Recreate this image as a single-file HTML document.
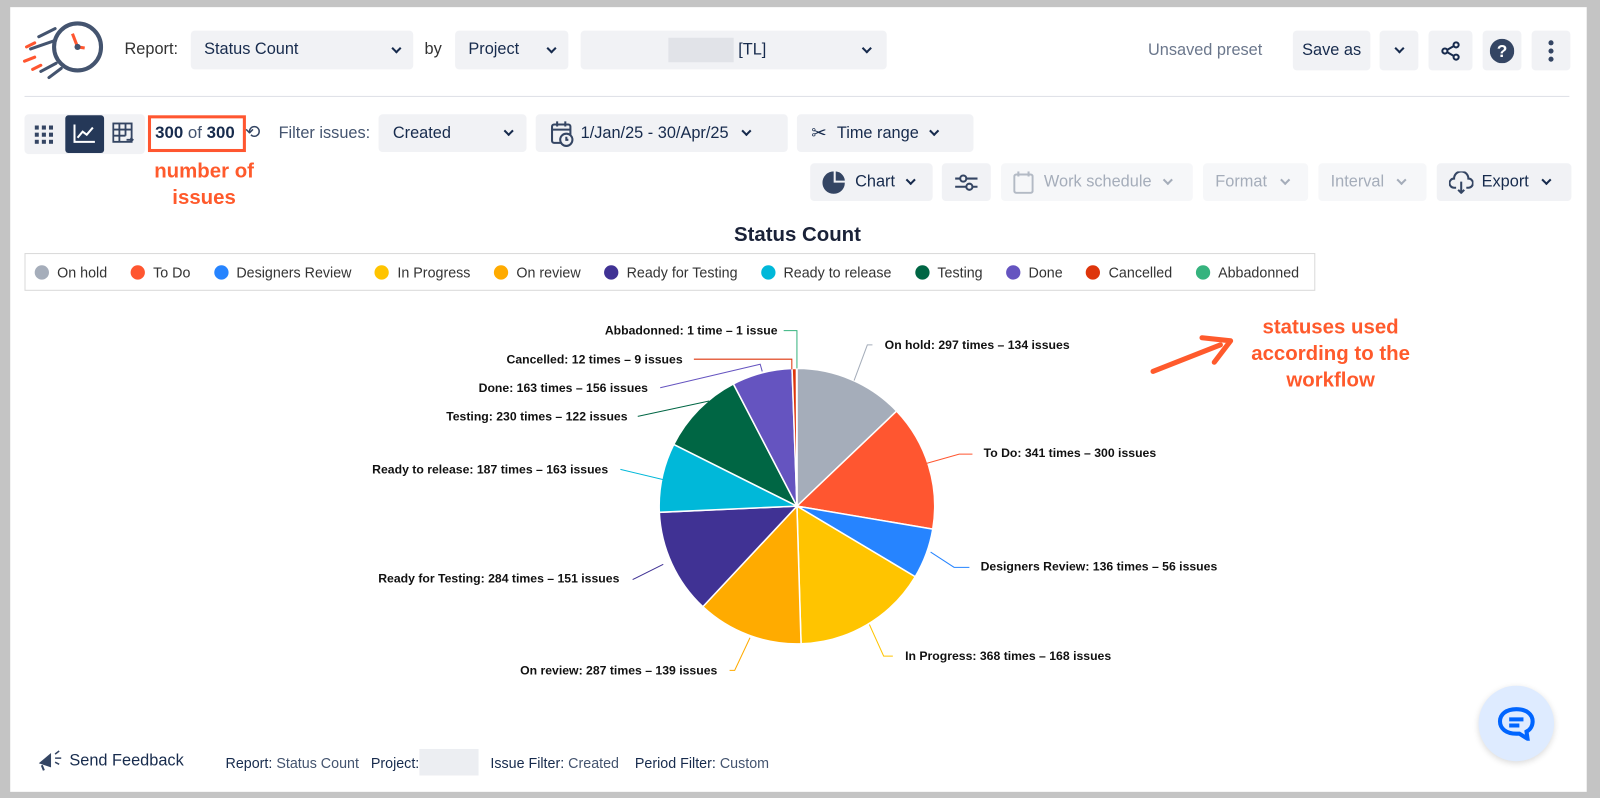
<!DOCTYPE html>
<html><head><meta charset="utf-8"><style>
*{box-sizing:border-box;margin:0;padding:0}
body{width:1600px;height:798px;background:#c4c4c4;font-family:"Liberation Sans",sans-serif;color:#172b4d;position:relative;overflow:hidden}
#s{position:absolute;left:0;top:0;width:1568px;height:782px;transform:scale(1.0204);transform-origin:0 0}
#w{position:absolute;left:10px;top:7px;width:1545px;height:769px;background:#fff}
.a{position:absolute}
.btn{position:absolute;background:#f1f2f5;border-radius:4px;font-size:16px;display:flex;align-items:center;color:#172b4d;white-space:nowrap}
.dis{color:#a5adba;background:#f6f7f9}
.chev{display:inline-block;width:7px;height:7px;border-right:2px solid currentColor;border-bottom:2px solid currentColor;transform:rotate(45deg);margin-top:-4px}
.lg{display:flex;align-items:center;font-size:14px;color:#333;margin-right:23px;white-space:nowrap}
.lg i{width:14px;height:14px;border-radius:50%;display:inline-block;margin-right:8px}
.lbl{font-size:12px;font-weight:bold;fill:#111}
.red{color:#ff5a2c;font-weight:bold;font-size:20px;text-align:center;line-height:26px}
</style></head><body>
<div id="s">
<div id="w"></div>
<svg class="a" style="left:22px;top:18px" width="80" height="62" viewBox="0 0 80 62">
<circle cx="54" cy="28" r="23" fill="none" stroke="#44546f" stroke-width="4"/>
<path d="M54 28 L49 15" stroke="#ff5630" stroke-width="3"/><path d="M54 28 L61 29" stroke="#ff5630" stroke-width="3"/>
<circle cx="54" cy="28" r="3" fill="#44546f"/>
<path d="M32 10 L16 18 M31 22 L8 30 M33 44 L18 52 M38 49 L26 58" stroke="#44546f" stroke-width="3" stroke-linecap="round"/>
<path d="M12 24 L4 28 M12 38 L2 42 M18 46 L10 50" stroke="#ff5630" stroke-width="3" stroke-linecap="round"/>
</svg>
<div class="a" style="left:122px;top:40px;font-size:16px;color:#333">Report:</div>
<div class="btn" style="left:187px;top:30px;width:218px;height:38px;padding:0 13px;justify-content:space-between">Status Count<span class="chev"></span></div>
<div class="a" style="left:416px;top:40px;font-size:16px;color:#333">by</div>
<div class="btn" style="left:446px;top:30px;width:111px;height:38px;padding:0 13px;justify-content:space-between">Project<span class="chev"></span></div>
<div class="btn" style="left:569px;top:30px;width:300px;height:38px;padding:0 16px 0 86px;justify-content:space-between"><span><span style="display:inline-block;width:64px;height:24px;background:#e1e3e8;vertical-align:middle"></span> [TL]</span><span class="chev"></span></div>
<div class="a" style="left:1125px;top:41px;font-size:16px;color:#6b778c">Unsaved preset</div>
<div class="btn" style="left:1267px;top:30px;width:76px;height:39px;justify-content:center">Save as</div>
<div class="btn" style="left:1352px;top:30px;width:38px;height:39px;justify-content:center"><span class="chev"></span></div>
<div class="btn" style="left:1400px;top:30px;width:43px;height:39px;justify-content:center"><svg width="20" height="20" viewBox="0 0 20 20" fill="none" stroke="#172b4d" stroke-width="2"><circle cx="15" cy="4" r="2.5"/><circle cx="4" cy="10" r="2.5"/><circle cx="15" cy="16" r="2.5"/><path d="M6 9 L13 5 M6 11 L13 15"/></svg></div>
<div class="btn" style="left:1453px;top:30px;width:38px;height:39px;justify-content:center"><svg width="24" height="24"><circle cx="12" cy="12" r="12" fill="#344563"/><text x="12" y="18" text-anchor="middle" font-size="17" font-weight="bold" fill="#fff" font-family="Liberation Sans">?</text></svg></div>
<div class="btn" style="left:1501px;top:30px;width:38px;height:39px;justify-content:center"><svg width="6" height="22"><circle cx="3" cy="3" r="2.5" fill="#344563"/><circle cx="3" cy="11" r="2.5" fill="#344563"/><circle cx="3" cy="19" r="2.5" fill="#344563"/></svg></div>
<div class="a" style="left:24px;top:94px;width:1514px;height:1px;background:#dfe1e6"></div>
<div class="btn" style="left:24px;top:112px;width:118px;height:39px"></div>
<svg class="a" style="left:34px;top:123px" width="18" height="18"><g fill="#344563"><rect x="0" y="0" width="4" height="4"/><rect x="7" y="0" width="4" height="4"/><rect x="14" y="0" width="4" height="4"/><rect x="0" y="7" width="4" height="4"/><rect x="7" y="7" width="4" height="4"/><rect x="14" y="7" width="4" height="4"/><rect x="0" y="14" width="4" height="4"/><rect x="7" y="14" width="4" height="4"/><rect x="14" y="14" width="4" height="4"/></g></svg>
<div class="a" style="left:64px;top:113px;width:38px;height:37px;background:#253858;border-radius:3px"></div>
<svg class="a" style="left:72px;top:121px" width="22" height="20" fill="none" stroke="#fff" stroke-width="2"><path d="M1 1 V18 H21"/><path d="M4 14 L9 8 L13 11 L19 4"/></svg>
<svg class="a" style="left:110px;top:120px" width="22" height="22" fill="none" stroke="#344563" stroke-width="1.8"><rect x="1" y="1" width="18" height="18"/><path d="M1 7 H19 M7 1 V19 M13 1 V13 M1 13 H13"/><path d="M14 17 H20 M18 15 L20 17 L18 19" /></svg>
<div class="a" style="left:145px;top:113px;width:96px;height:36px;border:3px solid #ff5630"></div>
<div class="a" style="left:152px;top:121px;font-size:16.5px"><b>300</b> <span style="color:#44546f">of</span> <b>300</b></div>
<div class="a" style="left:240px;top:119px;font-size:18px;color:#344563">⟲</div>
<div class="red a" style="left:138px;top:155px;width:124px">number of<br>issues</div>
<div class="a" style="left:273px;top:122px;font-size:16px;color:#44546f">Filter issues:</div>
<div class="btn" style="left:371px;top:112px;width:145px;height:37px;padding:0 14px;justify-content:space-between">Created<span class="chev"></span></div>
<div class="btn" style="left:525px;top:112px;width:247px;height:37px;padding:0 14px"><svg width="24" height="26" fill="none" stroke="#344563" stroke-width="2"><rect x="2" y="4" width="18" height="18" rx="2"/><path d="M2 9 H20 M7 1 V6 M15 1 V6"/><circle cx="16" cy="19" r="6" fill="#f1f2f5"/><path d="M16 16 V19 H18"/></svg><span style="margin:0 0 0 6px">1/Jan/25 - 30/Apr/25</span><span class="chev" style="margin-left:14px"></span></div>
<div class="btn" style="left:781px;top:112px;width:173px;height:37px;padding:0 14px"><span style="font-size:18px">✂</span><span style="margin:0 12px 0 10px">Time range</span><span class="chev"></span></div>
<div class="btn" style="left:794px;top:160px;width:120px;height:37px;padding:0 12px"><svg width="22" height="22"><path d="M11 11 V0 A11 11 0 1 0 22 11 Z" fill="#344563"/><path d="M13 0 A10 10 0 0 1 22 9 H13Z" fill="#344563"/></svg><span style="margin:0 12px 0 10px">Chart</span><span class="chev"></span></div>
<div class="btn" style="left:923px;top:160px;width:48px;height:37px;justify-content:center"><svg width="22" height="18" fill="none" stroke="#344563" stroke-width="2"><path d="M0 5 H22 M0 13 H22"/><circle cx="8" cy="5" r="3" fill="#f1f2f5"/><circle cx="14" cy="13" r="3" fill="#f1f2f5"/></svg></div>
<div class="btn dis" style="left:981px;top:160px;width:188px;height:37px;padding:0 12px"><svg width="20" height="22" fill="none" stroke="#b3bac5" stroke-width="2"><rect x="1" y="3" width="18" height="18" rx="2"/><path d="M5 0 V5 M15 0 V5"/></svg><span style="margin:0 12px 0 10px">Work schedule</span><span class="chev"></span></div>
<div class="btn dis" style="left:1179px;top:160px;width:103px;height:37px;padding:0 12px"><span style="margin-right:14px">Format</span><span class="chev"></span></div>
<div class="btn dis" style="left:1292px;top:160px;width:106px;height:37px;padding:0 12px"><span style="margin-right:14px">Interval</span><span class="chev"></span></div>
<div class="btn" style="left:1408px;top:160px;width:132px;height:37px;padding:0 12px"><svg width="24" height="22" fill="none" stroke="#344563" stroke-width="2"><path d="M7 16 H5 A4.5 4.5 0 0 1 5 7 A7 7 0 0 1 19 7 A4.5 4.5 0 0 1 19 16 H17"/><path d="M12 10 V21 M9 18 L12 21 L15 18"/></svg><span style="margin:0 14px 0 8px">Export</span><span class="chev"></span></div>
<div class="a" style="left:0;width:1563px;top:219px;text-align:center;font-size:20px;font-weight:bold;color:#1a2238">Status Count</div>
<div class="a" style="left:24px;top:248px;width:1265px;height:37px;border:1px solid #d9d9d9;display:flex;align-items:center;padding-left:9px;overflow:hidden">
<span class="lg"><i style="background:#a5adba"></i>On hold</span><span class="lg"><i style="background:#ff5630"></i>To Do</span><span class="lg"><i style="background:#2684ff"></i>Designers Review</span><span class="lg"><i style="background:#ffc400"></i>In Progress</span><span class="lg"><i style="background:#ffab00"></i>On review</span><span class="lg"><i style="background:#403294"></i>Ready for Testing</span><span class="lg"><i style="background:#00b8d9"></i>Ready to release</span><span class="lg"><i style="background:#006644"></i>Testing</span><span class="lg"><i style="background:#6554c0"></i>Done</span><span class="lg"><i style="background:#de350b"></i>Cancelled</span><span class="lg"><i style="background:#36b37e"></i>Abbadonned</span>
</div>
<svg class="a" style="left:0;top:0" width="1568" height="782">
<g id="sl"></g>
<g fill="none" stroke-width="1">
<path d="M768 324 H781 V361" stroke="#36b37e"/>
<path d="M680 352 H776 V362" stroke="#de350b"/>
<path d="M647 380 L745 357 L747 364" stroke="#6554c0"/>
<path d="M625 408 L695 393" stroke="#006644"/>
<path d="M608 460 L650 470" stroke="#00b8d9"/>
<path d="M620 568 L650 553" stroke="#403294"/>
<path d="M715 657 L720 657 L735 625" stroke="#ffab00"/>
<path d="M875 643 L866 643 L852 612" stroke="#ffc400"/>
<path d="M950 556 L935 556 L912 541" stroke="#2684ff"/>
<path d="M953 445 L940 445 L905 455" stroke="#ff5630"/>
<path d="M855 338 L850 338 L837 373" stroke="#a5adba"/>
</g>
<text class="lbl" x="762" y="328" text-anchor="end">Abbadonned: 1 time – 1 issue</text>
<text class="lbl" x="669" y="356" text-anchor="end">Cancelled: 12 times – 9 issues</text>
<text class="lbl" x="635" y="384" text-anchor="end">Done: 163 times – 156 issues</text>
<text class="lbl" x="615" y="412" text-anchor="end">Testing: 230 times – 122 issues</text>
<text class="lbl" x="596" y="464" text-anchor="end">Ready to release: 187 times – 163 issues</text>
<text class="lbl" x="607" y="571" text-anchor="end">Ready for Testing: 284 times – 151 issues</text>
<text class="lbl" x="703" y="661" text-anchor="end">On review: 287 times – 139 issues</text>
<text class="lbl" x="887" y="647">In Progress: 368 times – 168 issues</text>
<text class="lbl" x="961" y="559">Designers Review: 136 times – 56 issues</text>
<text class="lbl" x="964" y="448">To Do: 341 times – 300 issues</text>
<text class="lbl" x="867" y="342">On hold: 297 times – 134 issues</text>
<path d="M1130 364 L1196 338" stroke="#ff5a2c" stroke-width="5" stroke-linecap="round"/>
<path d="M1178 331 L1206 334 L1190 355" fill="none" stroke="#ff5a2c" stroke-width="5" stroke-linecap="round" stroke-linejoin="round"/>
</svg>
<div class="red a" style="left:1204px;top:308px;width:200px">statuses used<br>according to the<br>workflow</div>
<svg class="a" style="left:36px;top:734px" width="26" height="22"><path d="M2 14 L14 4 L14 18 Z" fill="#344563"/><path d="M5 16 L7 21" stroke="#344563" stroke-width="2"/><path d="M18 5 L22 2 M18 9 H24 M18 13 L22 15" stroke="#344563" stroke-width="1.5"/></svg>
<div class="a" style="left:68px;top:737px;font-size:16px;color:#172b4d">Send Feedback</div>
<div class="a" style="left:221px;top:738px;font-size:14px;color:#44546f;white-space:nowrap"><span style="color:#172b4d">Report:</span> Status Count &nbsp;&nbsp;<span style="color:#172b4d">Project:</span><span style="display:inline-block;width:58px;height:26px;background:#eceef2;vertical-align:middle;margin-top:-4px"></span> &nbsp;&nbsp;<span style="color:#172b4d">Issue Filter:</span> Created &nbsp;&nbsp;&nbsp;<span style="color:#172b4d">Period Filter:</span> Custom</div>
<div class="a" style="left:1449px;top:672px;width:74px;height:74px;border-radius:50%;background:#deebff;box-shadow:0 2px 6px rgba(0,0,0,.15)"></div>
<svg class="a" style="left:1467px;top:692px" width="38" height="34" fill="none" stroke="#0065ff" stroke-width="4"><path d="M19 3 C9 3 3 8 3 15 C3 22 9 27 19 27 L22 27 L30 32 L29 25 C33 23 35 19 35 15 C35 8 29 3 19 3 Z"/><path d="M12 13 H26 M12 19 H22"/></svg>
</div>
<script>
var d=[[297,"#a5adba"],[341,"#ff5630"],[136,"#2684ff"],[368,"#ffc400"],[287,"#ffab00"],[284,"#403294"],[187,"#00b8d9"],[230,"#006644"],[163,"#6554c0"],[12,"#de350b"],[1,"#36b37e"]];
var t=0,s="",cx=781,cy=496,r=135,a=0;d.forEach(function(x){t+=x[0]});
d.forEach(function(x){var b=a+x[0]/t*2*Math.PI;var x1=cx+r*Math.sin(a),y1=cy-r*Math.cos(a),x2=cx+r*Math.sin(b),y2=cy-r*Math.cos(b);
s+='<path d="M'+cx+' '+cy+' L'+x1+' '+y1+' A'+r+' '+r+' 0 '+((b-a)>Math.PI?1:0)+' 1 '+x2+' '+y2+' Z" fill="'+x[1]+'" stroke="#fff" stroke-width="1.5"/>';a=b;});
document.getElementById("sl").innerHTML=s;
</script>
</body></html>
